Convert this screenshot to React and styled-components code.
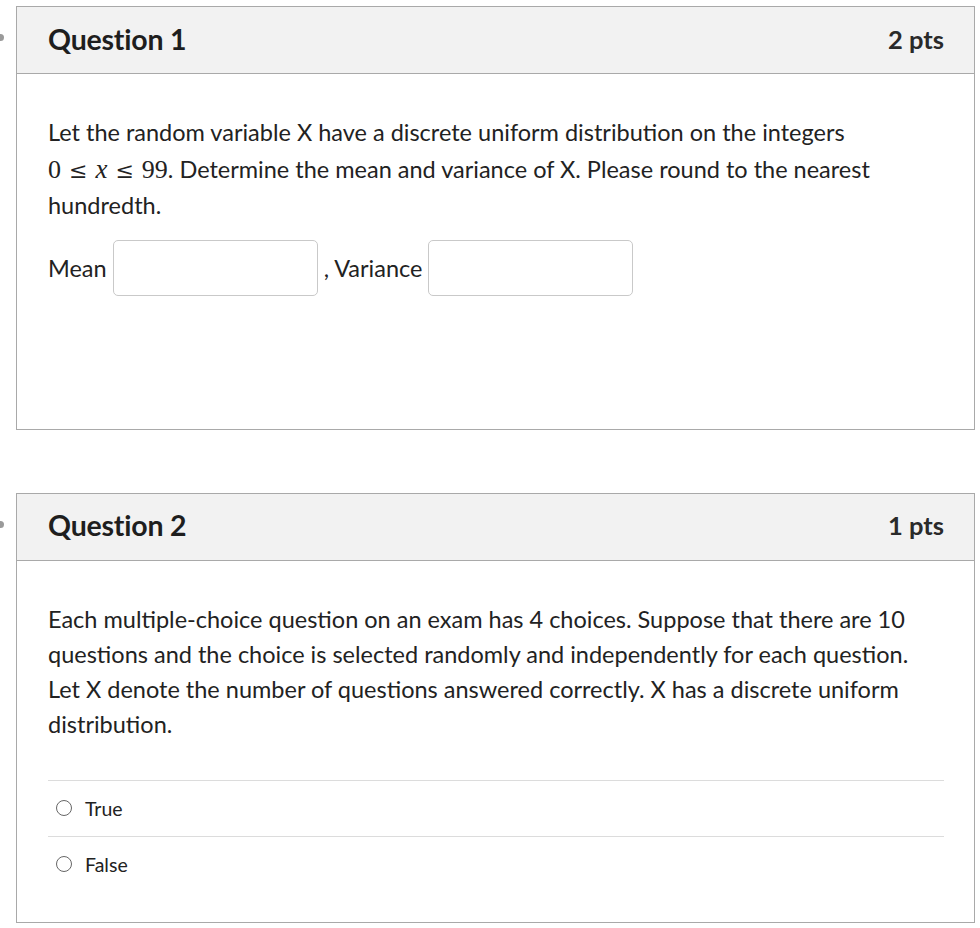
import React from "react";
import styled, { createGlobalStyle } from "styled-components";

const Global = createGlobalStyle`
  html, body { margin: 0; padding: 0; background: #ffffff; }
  body { font-family: Lato, "Open Sans", Arial, sans-serif; color: #222; }
`;

const Page = styled.div`
  display: flex;
  flex-direction: column;
  gap: 63px;
  padding: 6px 5px 0 16px;
`;

const Card = styled.section`
  position: relative;
  border: 1px solid #a9a9a9;
  background: #fff;
`;

const Marker = styled.span`
  position: absolute;
  left: -20px;
  top: 27px;
  width: 7px;
  height: 7px;
  border-radius: 50%;
  background: #9a9a9a;
`;

const Header = styled.header`
  display: flex;
  align-items: center;
  justify-content: space-between;
  height: 66px;
  padding: 0 30px 0 31px;
  background: #f2f2f2;
  border-bottom: 1px solid #a9a9a9;
`;

const Title = styled.h2`
  margin: 0 0 3px;
  font-size: 28.5px;
  font-weight: 700;
  color: #1e1e1e;
  letter-spacing: -0.2px;
`;

const Points = styled.span`
  margin-bottom: 3px;
  font-size: 25.5px;
  font-weight: 700;
  color: #2a2a2a;
`;

const Body = styled.div`
  padding: ${(p) => p.$pad};
`;

const Text = styled.p`
  margin: 0;
  font-size: 23.5px;
  line-height: ${(p) => p.$lh || "36.5px"};
  color: #222;
`;

const Math = styled.span`
  display: inline-block;
  white-space: nowrap;
  font-family: "Liberation Serif", "DejaVu Serif", serif;
  font-size: 26px;
  line-height: 1;
`;

const MathVar = styled.i`
  font-family: "Liberation Serif", serif;
  font-style: italic;
  font-size: 27px;
`;

const Rel = styled.span`
  display: inline-block;
  margin: 0 8px;
  font-family: "DejaVu Serif", serif;
  font-size: 22px;
`;

const AnswerRow = styled.div`
  display: flex;
  align-items: center;
  gap: 6px;
  margin-top: 16px;
  font-size: 23.5px;
  color: #222;
`;

const Blank = styled.input`
  width: 205px;
  height: 56px;
  box-sizing: border-box;
  border: 1px solid #c9c9c9;
  border-radius: 5px;
  background: #fff;
`;

const Options = styled.div`
  margin-top: 38px;
  display: flex;
  flex-direction: column;
`;

const Option = styled.label`
  display: flex;
  align-items: center;
  gap: 13px;
  height: 55px;
  padding-left: 8px;
  border-top: 1px solid #dcdcdc;
  font-size: 19.5px;
  color: #222;
`;

const Radio = styled.span`
  width: 16px;
  height: 16px;
  border-radius: 50%;
  border: 1.5px solid #666;
  box-sizing: border-box;
`;

export default function App() {
  return (
    <>
      <Global />
      <Page>
        <Card>
          <Marker />
          <Header>
            <Title>Question 1</Title>
            <Points>2 pts</Points>
          </Header>
          <Body $pad="40px 30px 133px 31px">
            <Text>
              Let the random variable X have a discrete uniform distribution on the integers{" "}
              <Math>
                0<Rel>≤</Rel>
                <MathVar>x</MathVar>
                <Rel>≤</Rel>99
              </Math>
              . Determine the mean and variance of X. Please round to the nearest hundredth.
            </Text>
            <AnswerRow>
              <span>Mean</span>
              <Blank type="text" />
              <span>, Variance</span>
              <Blank type="text" />
            </AnswerRow>
          </Body>
        </Card>
        <Card>
          <Marker />
          <Header>
            <Title>Question 2</Title>
            <Points>1 pts</Points>
          </Header>
          <Body $pad="41px 30px 30px 31px">
            <Text $lh="35px">
              Each multiple-choice question on an exam has 4 choices. Suppose that there are 10
              questions and the choice is selected randomly and independently for each question.
              Let X denote the number of questions answered correctly. X has a discrete uniform
              distribution.
            </Text>
            <Options>
              <Option>
                <Radio />
                True
              </Option>
              <Option>
                <Radio />
                False
              </Option>
            </Options>
          </Body>
        </Card>
      </Page>
    </>
  );
}
